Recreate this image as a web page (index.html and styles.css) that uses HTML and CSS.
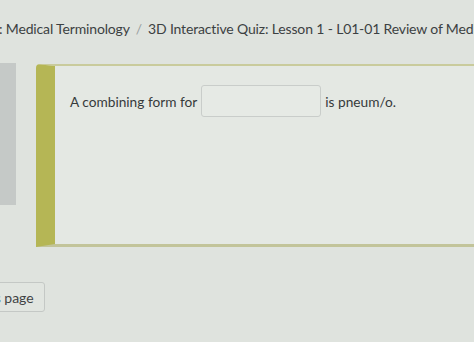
FILE: index.html
```html
<!DOCTYPE html>
<html lang="en">
<head>
<meta charset="utf-8">
<title>Quiz</title>
<link rel="stylesheet" href="styles.css">
</head>
<body>
<div class="page">
  <nav class="crumbs">
    <span>: Medical Terminology</span>
    <span class="sep">/</span>
    <span>3D Interactive Quiz: Lesson 1 - L01-01 Review of Medical Terms</span>
  </nav>
  <div class="main">
    <div class="side"></div>
    <section class="card">
      <div class="question">
        <span>A combining form for</span>
        <input class="blank" type="text" aria-label="answer">
        <span>is pneum/o.</span>
      </div>
    </section>
  </div>
  <div class="footer">
    <button class="btn" type="button">Previous page</button>
  </div>
</div>
</body>
</html>
```
FILE: styles.css
```css
html, body {
  margin: 0;
  padding: 0;
}
body {
  width: 474px;
  height: 342px;
  overflow: hidden;
  background: #dfe3de;
  font-family: Lato, "Open Sans", "Liberation Sans", sans-serif;
  color: #3a3e3f;
}
.page {
  display: flex;
  flex-direction: column;
}
.crumbs {
  display: flex;
  gap: 6px;
  white-space: nowrap;
  margin-left: -1px;
  padding-top: 19px;
  font-size: 14px;
  line-height: 20px;
  letter-spacing: -0.15px;
  color: #3c4142;
}
.crumbs .sep {
  color: #9aa09e;
}
.main {
  display: flex;
  align-items: flex-start;
  gap: 20px;
  margin-top: 24px;
}
.side {
  width: 16px;
  height: 142px;
  flex: none;
  background: #c5c9c7;
}
.card {
  flex: none;
  width: 460px;
  height: 178px;
  margin-top: 1px;
  background: #e4e8e3;
  border-left: 19px solid #b5b655;
  border-top: 2px solid #c9cb9c;
  border-bottom: 3px solid #c2c49a;
  border-top-left-radius: 4px;
  box-sizing: content-box;
}
.question {
  display: flex;
  align-items: center;
  gap: 4px;
  padding: 19px 0 0 15px;
  font-size: 13.7px;
  color: #363a3b;
}
.blank {
  width: 120px;
  height: 32px;
  box-sizing: border-box;
  margin: 0;
  border: 1px solid #c9cdca;
  border-radius: 3px;
  background: #e6eae5;
}
.footer {
  margin-top: 35px;
}
.btn {
  margin-left: -63px;
  height: 30px;
  padding: 0 10px;
  font-family: inherit;
  font-size: 14px;
  color: #3f4344;
  background: #e1e5e0;
  border: 1px solid #c4c8c5;
  border-radius: 3px;
}
```
